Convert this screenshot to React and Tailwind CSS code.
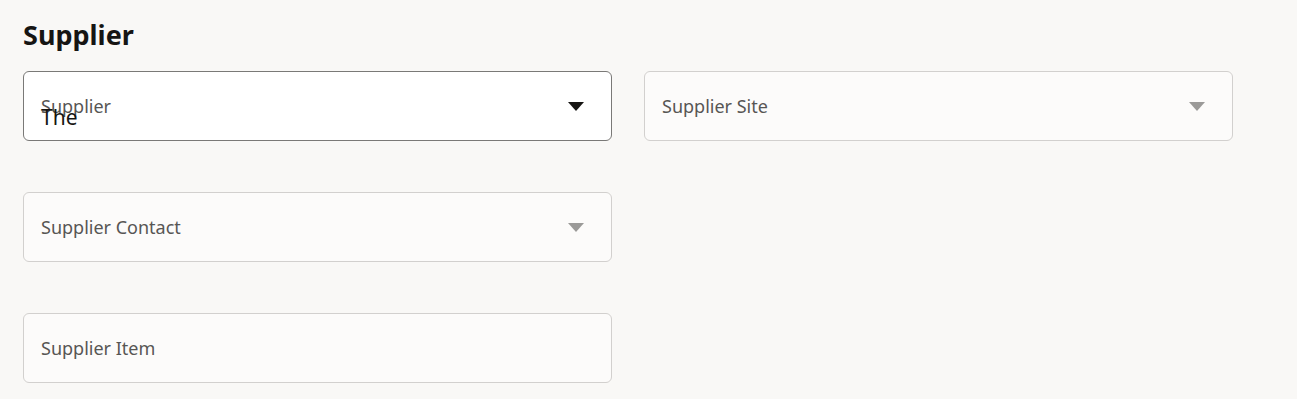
import React from "react";

const Caret = ({ dark }) => (
  <svg width="16" height="9" viewBox="0 0 16 9" className="shrink-0">
    <path d="M0 0 L16 0 L8 9 Z" fill={dark ? "#161513" : "#9b9a98"} />
  </svg>
);

const Field = ({ label, select, active, value }) => (
  <div
    className={`relative h-[70px] rounded-[6px] border flex items-center pl-[17px] pr-[27px] ${
      active ? "bg-white border-[#7a7977]" : "bg-[#fcfbfa] border-[#d2d0ce]"
    }`}
  >
    <span className="flex-1 text-[18px] text-[#575654] leading-none">{label}</span>
    {value && (
      <span className="absolute left-[17px] top-[35px] text-[21px] leading-none text-[#161513]">
        {value}
      </span>
    )}
    {select && <Caret dark={active} />}
  </div>
);

export default function App() {
  return (
    <div
      className="min-h-screen bg-[#f9f8f6] pl-[23px] pt-[19px]"
      style={{ fontFamily: '"Noto Sans", "Open Sans", sans-serif' }}
    >
      <h1 className="text-[27px] font-bold leading-[32px] text-[#161513] mb-[20px]">Supplier</h1>
      <div className="grid grid-cols-[589px_589px] gap-x-[32px] gap-y-[51px]">
        <Field label="Supplier" select active value="The" />
        <Field label="Supplier Site" select />
        <Field label="Supplier Contact" select />
        <div />
        <Field label="Supplier Item" />
      </div>
    </div>
  );
}
